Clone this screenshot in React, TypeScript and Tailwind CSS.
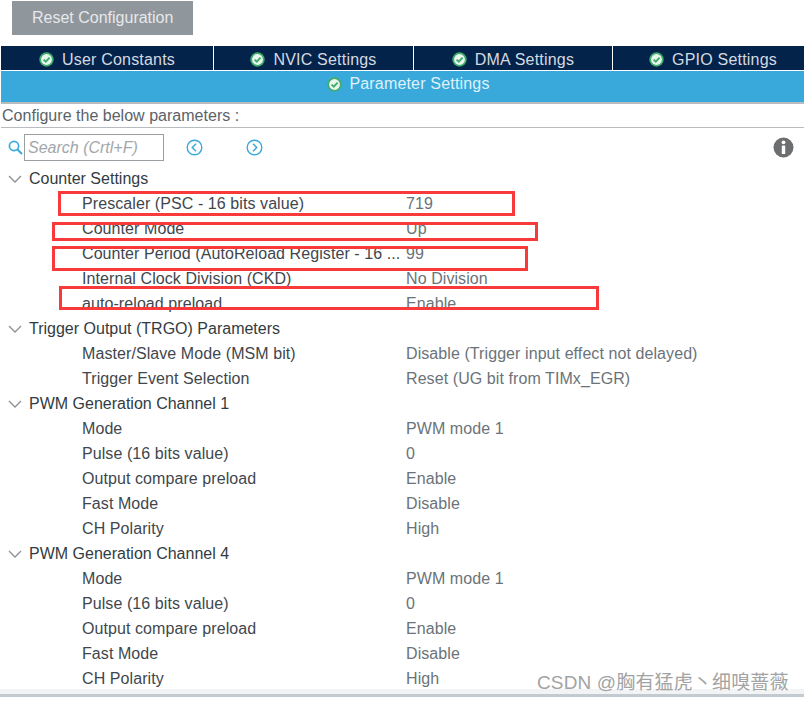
import React from "react";

const Check = () => (
  <svg width="15" height="15" viewBox="0 0 15 15" className="shrink-0">
    <circle cx="7.5" cy="7.5" r="7.2" fill="#3fae6b" />
    <circle cx="7.5" cy="7.5" r="5.4" fill="#e9f6ee" />
    <path d="M4.6 7.6 L6.8 9.7 L10.6 5.6" fill="none" stroke="#3fae6b" strokeWidth="2" />
  </svg>
);

const Tab = ({ label, w }: { label: string; w: string }) => (
  <div className={`${w} h-full bg-[#03234b] flex items-center justify-center gap-[8px] pt-[2px] text-[#d5dae0] text-[16px] tracking-[0.2px]`}>
    <Check />
    <span className="relative top-[1px]">{label}</span>
  </div>
);

const Chevron = () => (
  <svg width="14" height="8" viewBox="0 0 14 8" className="shrink-0">
    <path d="M1 1 L7 7 L13 1" fill="none" stroke="#8a9096" strokeWidth="1.3" />
  </svg>
);

const Header = ({ label }: { label: string }) => (
  <div className="h-[25px] flex items-center pl-[8px] gap-[7px] text-[#333b42]">
    <Chevron />
    <span>{label}</span>
  </div>
);

const Row = ({ k, v }: { k: string; v: string }) => (
  <div className="h-[25px] flex items-center pl-[82px] tracking-[0.08px]">
    <span className="w-[324px] whitespace-nowrap text-[#3f474e]">{k}</span>
    <span className="whitespace-nowrap text-[#6b7379]">{v}</span>
  </div>
);

const Red = ({ c }: { c: string }) => <div className={`absolute border-[3px] border-[#f83a3a] ${c}`} />;

const Circle = ({ d }: { d: string }) => (
  <svg width="17" height="17" viewBox="0 0 17 17">
    <circle cx="8.5" cy="8.5" r="7.3" fill="none" stroke="#39a9dc" strokeWidth="1.4" />
    <path d={d} fill="none" stroke="#39a9dc" strokeWidth="1.5" />
  </svg>
);

const channel = (
  <>
    <Row k="Mode" v="PWM mode 1" />
    <Row k="Pulse (16 bits value)" v="0" />
    <Row k="Output compare preload" v="Enable" />
    <Row k="Fast Mode" v="Disable" />
    <Row k="CH Polarity" v="High" />
  </>
);

export default function App() {
  return (
    <div className="relative w-[804px] h-[701px] bg-white overflow-hidden text-[16px] leading-[20px] font-['Liberation_Sans',Arial,sans-serif]">
      <div className="h-[46px] pt-px pl-3">
        <div className="w-[181px] h-[34px] bg-[#90979c] text-[#e6e8ea] flex items-center pl-5">Reset Configuration</div>
      </div>
      <div className="h-[24px] ml-px flex gap-px">
        <Tab label="User Constants" w="w-[212px]" />
        <Tab label="NVIC Settings" w="w-[199px]" />
        <Tab label="DMA Settings" w="w-[198px]" />
        <Tab label="GPIO Settings" w="w-[191px] pl-[9px]" />
      </div>
      <div className="h-[31px] mt-px ml-px pl-[12px] pb-[5px] bg-[#39a9dc] flex items-center justify-center gap-[7px] text-[#dff1fa] tracking-[0.18px]">
        <Check />
        <span>Parameter Settings</span>
      </div>
      <div className="h-[26px] border-t-2 border-b border-[#b9bcbf] ml-px flex items-center pl-px text-[#5b6369] tracking-[0.02px]">Configure the below parameters :</div>
      <div className="h-[38px] flex items-center pl-[8px] pr-[10px] pt-px">
        <svg width="15" height="15" viewBox="0 0 15 15" className="shrink-0">
          <circle cx="6" cy="6" r="4.6" fill="none" stroke="#39a9dc" strokeWidth="1.7" />
          <path d="M9.5 9.5 L14 14" stroke="#39a9dc" strokeWidth="2" />
        </svg>
        <div className="ml-px w-[140px] h-[27px] border border-[#9a9fa3] flex items-center pl-[3px] pt-px italic text-[#a2a7ab]">Search (Crtl+F)</div>
        <div className="ml-[22px]"><Circle d="M10 4.8 L6.3 8.5 L10 12.2" /></div>
        <div className="ml-[43px]"><Circle d="M7 4.8 L10.7 8.5 L7 12.2" /></div>
        <svg width="21" height="21" viewBox="0 0 21 21" className="ml-auto shrink-0">
          <circle cx="10.5" cy="10.5" r="10" fill="#6d6e70" />
          <circle cx="10.5" cy="5.3" r="1.9" fill="#fff" />
          <rect x="8.8" y="8.6" width="3.4" height="8.4" fill="#fff" />
        </svg>
      </div>
      <div>
        <Header label="Counter Settings" />
        <Row k="Prescaler (PSC - 16 bits value)" v="719" />
        <Row k="Counter Mode" v="Up" />
        <Row k="Counter Period (AutoReload Register - 16 ..." v="99" />
        <Row k="Internal Clock Division (CKD)" v="No Division" />
        <Row k="auto-reload preload" v="Enable" />
        <Header label="Trigger Output (TRGO) Parameters" />
        <Row k="Master/Slave Mode (MSM bit)" v="Disable (Trigger input effect not delayed)" />
        <Row k="Trigger Event Selection" v="Reset (UG bit from TIMx_EGR)" />
        <Header label="PWM Generation Channel 1" />
        {channel}
        <Header label="PWM Generation Channel 4" />
        {channel}
      </div>
      <div className="absolute left-0 right-0 bottom-[4px] h-[3px] bg-[#c3cbd0]" />
      <div className="absolute left-0 right-0 bottom-[7px] h-[5px] bg-[#f2f3f4]" />
      <Red c="left-[58px] top-[191px] w-[457px] h-[25px]" />
      <Red c="left-[52px] top-[222px] w-[486px] h-[19px]" />
      <Red c="left-[52px] top-[246px] w-[476px] h-[25px]" />
      <Red c="left-[59px] top-[286px] w-[540px] h-[24px]" />
      <div className="absolute left-[537px] top-[671px] text-[19px] leading-[24px] tracking-[0.15px] text-[#a3a3a3] whitespace-nowrap font-['Liberation_Sans','Noto_Sans_CJK_SC',sans-serif]">CSDN @胸有猛虎丶细嗅蔷薇</div>
    </div>
  );
}
